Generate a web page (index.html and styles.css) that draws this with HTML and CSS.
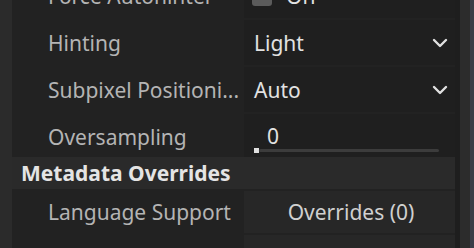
FILE: index.html
```html
<!DOCTYPE html>
<html lang="en">
<head>
    <meta charset="UTF-8">
    <title>Inspector - Font Import</title>
    <link rel="stylesheet" href="styles.css">
</head>
<body>
    <div class="panel">
        <div class="panel__gutter"></div>
        <div class="inspector">
            <div class="prop">
                <div class="prop__label">Force Autohinter</div>
                <div class="prop__value prop__value--check">
                    <span class="check"></span>
                    <span class="prop__text">On</span>
                </div>
            </div>
            <div class="prop">
                <div class="prop__label">Hinting</div>
                <div class="prop__value">
                    <span class="prop__text">Light</span>
                    <svg class="chevron" viewBox="0 0 16 10" width="16" height="10">
                        <path d="M2 2l6 6 6-6" fill="none" stroke="#e0e0e0" stroke-width="2.4" stroke-linecap="round" stroke-linejoin="round"/>
                    </svg>
                </div>
            </div>
            <div class="prop">
                <div class="prop__label">Subpixel Positioni...</div>
                <div class="prop__value">
                    <span class="prop__text">Auto</span>
                    <svg class="chevron" viewBox="0 0 16 10" width="16" height="10">
                        <path d="M2 2l6 6 6-6" fill="none" stroke="#e0e0e0" stroke-width="2.4" stroke-linecap="round" stroke-linejoin="round"/>
                    </svg>
                </div>
            </div>
            <div class="prop">
                <div class="prop__label">Oversampling</div>
                <div class="prop__value prop__value--slider">
                    <span class="prop__number">0</span>
                    <div class="slider">
                        <span class="slider__grab"></span>
                        <span class="slider__track"></span>
                    </div>
                </div>
            </div>
            <div class="section">Metadata Overrides</div>
            <div class="prop prop--short">
                <div class="prop__label">Language Support</div>
                <div class="prop__value prop__value--button">Overrides (0)</div>
            </div>
            <div class="prop prop--short">
                <div class="prop__label"></div>
                <div class="prop__value prop__value--button"></div>
            </div>
        </div>
        <div class="scrollbar"></div>
        <div class="panel__edge"></div>
    </div>
</body>
</html>
```

FILE: styles.css
```css
body {
    margin: 0;
    padding: 0;
    background-color: #222222;
    font-family: "Noto Sans", sans-serif;
    overflow: hidden;
    height: 248px;
}

.panel {
    display: flex;
    height: 248px;
}

.panel__gutter {
    width: 12px;
    background-color: #2b2b2b;
    flex-shrink: 0;
}

.inspector {
    width: 443px;
    flex-shrink: 0;
    display: flex;
    flex-direction: column;
    gap: 2px;
    margin-top: -27px;
}

.scrollbar {
    width: 5px;
    background-color: #1e1e1e;
    flex-shrink: 0;
}

.panel__edge {
    flex: 1;
    background-color: #2c2c2c;
    border-right: 4px solid #3a3d48;
}

.prop {
    display: flex;
    height: 45px;
    flex-shrink: 0;
}

.prop--short {
    height: 42px;
}

.prop__label {
    width: 196px;
    padding-left: 36px;
    display: flex;
    align-items: center;
    font-size: 21px;
    color: #b4b4b4;
    white-space: nowrap;
    overflow: hidden;
}

.prop__value {
    flex: 1;
    display: flex;
    align-items: center;
    justify-content: space-between;
    padding: 0 7px 0 10px;
    background-color: #1f1f1f;
    font-size: 21px;
    color: #e2e2e2;
}

.prop__value--check {
    justify-content: flex-start;
    gap: 14px;
    padding-left: 8px;
}

.check {
    width: 20px;
    height: 20px;
    border-radius: 3px;
    background-color: #5b5b5b;
}

.chevron {
    display: block;
}

.prop__value--slider {
    flex-direction: column;
    align-items: stretch;
    justify-content: flex-start;
    padding: 0 16px 0 10px;
}

.prop__number {
    padding-left: 13px;
    line-height: 24px;
    margin-top: 10px;
}

.slider {
    height: 5px;
    display: flex;
    align-items: center;
}

.slider__grab {
    width: 5px;
    height: 5px;
    background-color: #e0e0e0;
    flex-shrink: 0;
}

.slider__track {
    flex: 1;
    height: 3px;
    background-color: #3c3c3c;
    border-radius: 2px;
}

.section {
    height: 32px;
    flex-shrink: 0;
    margin-top: -4px;
    display: flex;
    align-items: center;
    padding-left: 9px;
    background-color: #2a2a2a;
    font-size: 21px;
    font-weight: bold;
    color: #e4e4e4;
}

.prop__value--button {
    justify-content: center;
    background-color: #272727;
    color: #d0d0d0;
}
```
